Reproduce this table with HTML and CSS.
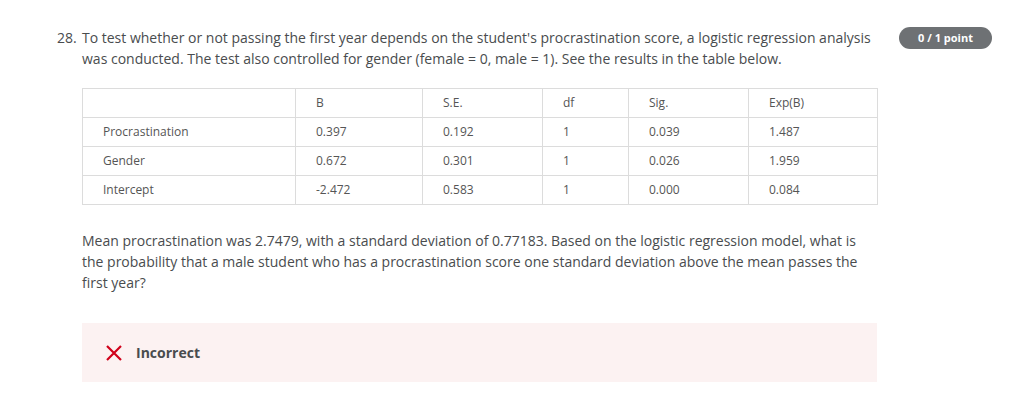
FILE: index.html
```html
<!DOCTYPE html>
<html lang="en">
<head>
<meta charset="utf-8">
<title>Question 28</title>
<link rel="stylesheet" href="styles.css">
</head>
<body>
<div class="page">
  <div class="question">
    <div class="num">28.</div>
    <div class="content">
      <p class="stem">To test whether or not passing the first year depends on the student's procrastination score, a logistic regression analysis was conducted. The test also controlled for gender (female = 0, male = 1). See the results in the table below.</p>
      <table class="results">
        <colgroup>
          <col class="c1"><col class="c2"><col class="c3"><col class="c4"><col class="c5"><col class="c6">
        </colgroup>
        <tr><td></td><td>B</td><td>S.E.</td><td>df</td><td>Sig.</td><td>Exp(B)</td></tr>
        <tr><td>Procrastination</td><td>0.397</td><td>0.192</td><td>1</td><td>0.039</td><td>1.487</td></tr>
        <tr><td>Gender</td><td>0.672</td><td>0.301</td><td>1</td><td>0.026</td><td>1.959</td></tr>
        <tr><td>Intercept</td><td>-2.472</td><td>0.583</td><td>1</td><td>0.000</td><td>0.084</td></tr>
      </table>
      <p class="prompt">Mean procrastination was 2.7479, with a standard deviation of 0.77183. Based on the logistic regression model, what is the probability that a male student who has a procrastination score one standard deviation above the mean passes the first year?</p>
      <div class="feedback">
        <svg class="xicon" width="18" height="18" viewBox="0 0 18 18"><path d="M2 2 L16 16 M16 2 L2 16" stroke="#d0021b" stroke-width="2.2" fill="none"/></svg>
        <span class="label">Incorrect</span>
      </div>
    </div>
    <div class="badge">0 / 1 point</div>
  </div>
</div>
</body>
</html>
```

FILE: styles.css
```css
html, body {
  margin: 0;
  padding: 0;
  background: #ffffff;
}
body {
  font-family: "Open Sans", "Liberation Sans", sans-serif;
  color: #494c4e;
}
.page {
  padding: 27px 0 0 57px;
}
.question {
  display: flex;
  align-items: flex-start;
}
.num {
  width: 25px;
  font-size: 14px;
  line-height: 21px;
}
.content {
  width: 795px;
}
.stem, .prompt {
  margin: 0;
  font-size: 14px;
  line-height: 21px;
}
.results {
  margin-top: 19px;
  width: 795px;
  border-collapse: collapse;
  table-layout: fixed;
  font-size: 12px;
  color: #555;
}
.c1 { width: 213px; }
.c2 { width: 127px; }
.c3 { width: 120px; }
.c4 { width: 86px; }
.c5 { width: 120px; }
.c6 { width: 129px; }
.results td {
  border: 1px solid #dcdcdc;
  height: 29px;
  padding: 0 20px 1px;
  box-sizing: border-box;
  vertical-align: middle;
}
.prompt {
  margin-top: 25px;
}
.feedback {
  margin-top: 30px;
  height: 59px;
  background: #fcf2f2;
  display: flex;
  align-items: center;
  padding-left: 23px;
}
.xicon {
  display: block;
}
.label {
  margin-left: 13px;
  font-weight: 700;
  font-size: 14px;
  color: #494c4e;
}
.badge {
  margin-left: 22px;
  width: 93px;
  height: 22px;
  border-radius: 11px;
  background: #6e7174;
  color: #fff;
  font-size: 11px;
  font-weight: 700;
  line-height: 22px;
  text-align: center;
  box-sizing: border-box;
}
```
